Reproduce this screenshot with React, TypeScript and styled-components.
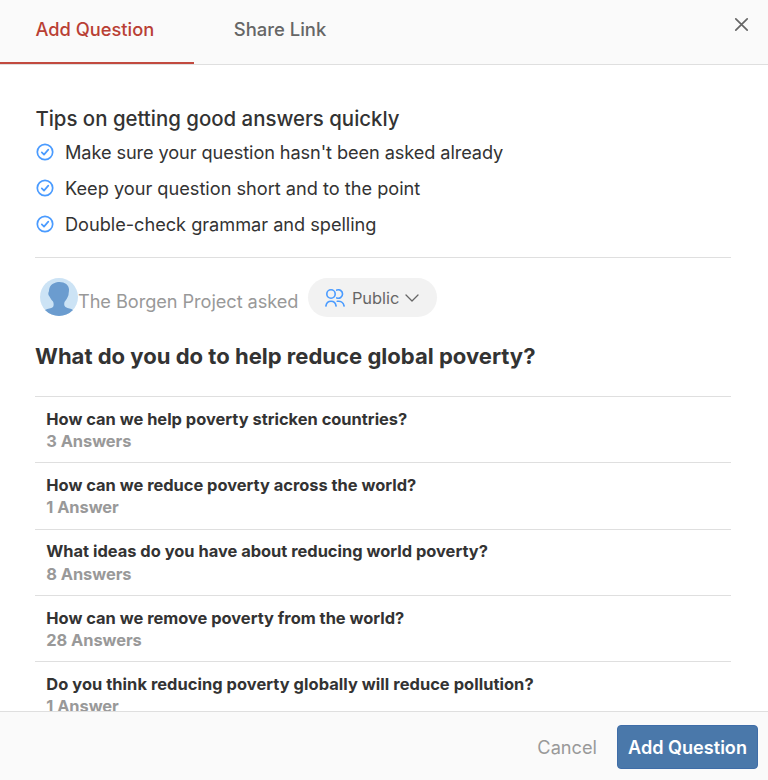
import React from "react";
import styled, { createGlobalStyle } from "styled-components";

const GlobalStyle = createGlobalStyle`
  *, *::before, *::after { box-sizing: border-box; }
  html, body { margin: 0; padding: 0; }
  body { background: #fff; overflow: hidden; }
  button { font: inherit; border: 0; margin: 0; padding: 0; background: none; cursor: pointer; }
  h2, h3, p, ul { margin: 0; padding: 0; list-style: none; font-weight: inherit; }
`;

const Dialog = styled.div`
  display: flex;
  flex-direction: column;
  width: 768px;
  height: 780px;
  background: #fff;
  color: #333;
  font-family: Inter, "Liberation Sans", sans-serif;
  white-space: nowrap;
`;

const Header = styled.header`
  display: flex;
  align-items: stretch;
  flex: none;
  height: 65px;
  background: #fafafa;
  border-bottom: 1px solid #dfdfdf;
`;

const Tab = styled.button<{ $active?: boolean }>`
  width: ${(p) => (p.$active ? 194 : 172)}px;
  padding: 0 0 4px ${(p) => (p.$active ? 35.4 : 39.8)}px;
  text-align: left;
  font-size: ${(p) => (p.$active ? 18.3 : 18.45)}px;
  font-weight: 500;
  line-height: 24px;
  color: ${(p) => (p.$active ? "#b93f34" : "#666")};
  border-bottom: 2px solid ${(p) => (p.$active ? "#c24a3f" : "transparent")};
`;

const CloseButton = styled.button`
  display: flex;
  align-self: flex-start;
  margin: 17px 19px 0 auto;
`;

const Body = styled.main`
  flex: 1;
  min-height: 0;
  overflow: hidden;
  padding: 41px 37.5px 0 35px;
`;

const TipsTitle = styled.h3`
  padding-left: 0.4px;
  font-size: 20.4px;
  font-weight: 500;
  line-height: 25px;
`;

const TipList = styled.ul`
  padding-top: 3px;
  padding-bottom: 15px;
  border-bottom: 1px solid #dfdfdf;
`;

const Tip = styled.li<{ $tracking: number }>`
  display: flex;
  align-items: center;
  gap: 11px;
  padding-left: 1px;
  height: 36.2px;
  font-size: 18.2px;
  line-height: 22px;
  letter-spacing: ${(p) => p.$tracking}px;
  &:first-child { height: 36px; }
`;

const AskerRow = styled.div`
  display: flex;
  align-items: flex-start;
  height: 39px;
  margin-top: 20px;
  padding-left: 5px;
`;

const Asker = styled.p`
  margin: 11px 10px 0 0;
  font-size: 18.2px;
  line-height: 24px;
  letter-spacing: -0.06px;
  color: #999;
`;

const AudiencePill = styled.button`
  display: flex;
  align-items: center;
  width: 129px;
  height: 39px;
  padding-left: 16.5px;
  border-radius: 20px;
  background: #f2f2f2;
  color: #666;
  font-size: 16.4px;
`;

const PillLabel = styled.span`
  margin: 0 6px 0 7px;
`;

const Question = styled.h2`
  margin-top: 25px;
  font-size: 22.05px;
  font-weight: 700;
  line-height: 28px;
`;

const Similar = styled.ul`
  margin-top: 25.6px;
`;

const SimilarRow = styled.li<{ $tracking?: number }>`
  height: 66.3px;
  padding: 10.8px 0 0 11.3px;
  border-top: 1px solid #dfdfdf;
  font-size: 16.43px;
  font-weight: 700;
  line-height: 22.2px;
  letter-spacing: ${(p) => p.$tracking ?? 0}px;
`;

const AnswerCount = styled.p`
  color: #999;
  letter-spacing: -0.06px;
`;

const Footer = styled.footer`
  display: flex;
  align-items: center;
  justify-content: flex-end;
  flex: none;
  gap: 20px;
  height: 69px;
  padding: 2px 10px 0 0;
  background: #fafafa;
  border-top: 1px solid #dfdfdf;
`;

const CancelButton = styled.button`
  font-size: 18.2px;
  color: #999;
`;

const SubmitButton = styled.button`
  width: 141px;
  height: 44px;
  border: 1px solid #3f6da8;
  border-radius: 4px;
  background: #4a78aa;
  color: #fff;
  font-size: 18.1px;
  font-weight: 600;
`;

const CheckIcon = () => (
  <svg width="18" height="18" viewBox="0 0 18 18" fill="none" stroke="#4a9bff" strokeWidth="1.7" strokeLinecap="round" strokeLinejoin="round">
    <circle cx="9" cy="9" r="7.7" />
    <path d="M5.8 9.4 8 11.6 12.3 6.6" />
  </svg>
);

const CloseIcon = () => (
  <svg width="15" height="15" viewBox="0 0 15 15" fill="none" stroke="#666" strokeWidth="1.7" strokeLinecap="round">
    <path d="M1.8 1.8 13.2 13.2M13.2 1.8 1.8 13.2" />
  </svg>
);

const Avatar = () => (
  <svg width="38" height="38" viewBox="0 0 38 38">
    <defs>
      <clipPath id="face"><circle cx="19" cy="19" r="19" /></clipPath>
    </defs>
    <g clipPath="url(#face)">
      <rect width="38" height="38" fill="#cce3f5" />
      <path fill="#6b9ccf" d="M18 4C24 3.4 29 6.5 29 11.5C29 14 28.5 15 28.5 17C27.5 20 26 22 24.5 24C24 26 24 28 25.5 29C28 30.5 31 30.5 33 32L33 38H5V32C8 30.5 11 30.5 13 29C14 27.5 13.8 25 13 23.5C11 21.5 9.8 19 8.5 17C8 15 8.5 14.5 9 13C9 8 12 5 18 4Z" />
    </g>
  </svg>
);

const PeopleIcon = () => (
  <svg width="20" height="18" viewBox="0 0 20 18" fill="none" stroke="#4a9bff" strokeWidth="1.6" strokeLinecap="round">
    <circle cx="6" cy="5" r="4.2" />
    <path d="M11.8 1.1A4.2 4.2 0 1 1 11.8 8.9M0.9 17C2 10.7 10 10.7 11.1 17M12.3 12.3C15.5 11.7 18.4 13.5 19.1 17" />
  </svg>
);

const ChevronIcon = () => (
  <svg width="14" height="8" viewBox="0 0 14 8" fill="none" stroke="#666" strokeWidth="1.3" strokeLinecap="round" strokeLinejoin="round">
    <path d="M1 1 7 7 13 1" />
  </svg>
);

const tips = [
  { text: "Make sure your question hasn't been asked already", tracking: -0.1 },
  { text: "Keep your question short and to the point", tracking: -0.01 },
  { text: "Double-check grammar and spelling", tracking: -0.03 },
];

const similar = [
  { title: "How can we help poverty stricken countries?", answers: "3 Answers" },
  { title: "How can we reduce poverty across the world?", answers: "1 Answer" },
  { title: "What ideas do you have about reducing world poverty?", answers: "8 Answers" },
  { title: "How can we remove poverty from the world?", answers: "28 Answers" },
  { title: "Do you think reducing poverty globally will reduce pollution?", answers: "1 Answer", tracking: 0.05 },
];

export default function App() {
  return (
    <>
      <GlobalStyle />
      <Dialog role="dialog">
        <Header>
          <Tab $active>Add Question</Tab>
          <Tab>Share Link</Tab>
          <CloseButton aria-label="Close"><CloseIcon /></CloseButton>
        </Header>
        <Body>
          <TipsTitle>Tips on getting good answers quickly</TipsTitle>
          <TipList>
            {tips.map((tip) => (
              <Tip key={tip.text} $tracking={tip.tracking}>
                <CheckIcon />
                <span>{tip.text}</span>
              </Tip>
            ))}
          </TipList>
          <AskerRow>
            <Avatar />
            <Asker>The Borgen Project asked</Asker>
            <AudiencePill>
              <PeopleIcon />
              <PillLabel>Public</PillLabel>
              <ChevronIcon />
            </AudiencePill>
          </AskerRow>
          <Question>What do you do to help reduce global poverty?</Question>
          <Similar>
            {similar.map((row) => (
              <SimilarRow key={row.title} $tracking={row.tracking}>
                <p>{row.title}</p>
                <AnswerCount>{row.answers}</AnswerCount>
              </SimilarRow>
            ))}
          </Similar>
        </Body>
        <Footer>
          <CancelButton>Cancel</CancelButton>
          <SubmitButton>Add Question</SubmitButton>
        </Footer>
      </Dialog>
    </>
  );
}
